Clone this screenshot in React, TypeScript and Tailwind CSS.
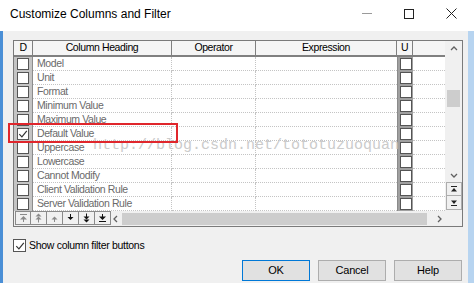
import React from "react";

const rows = [
  "Model",
  "Unit",
  "Format",
  "Minimum Value",
  "Maximum Value",
  "Default Value",
  "Uppercase",
  "Lowercase",
  "Cannot Modify",
  "Client Validation Rule",
  "Server Validation Rule",
];

function Check({ checked, size = 12 }: { checked?: boolean; size?: number }) {
  return (
    <div
      className="bg-white border border-[#555555] flex items-center justify-center shrink-0"
      style={{ width: size, height: size }}
    >
      {checked && (
        <svg width="10" height="10" viewBox="0 0 10 10">
          <path d="M1.3 5.2 L3.9 7.8 L8.8 1.8" stroke="#333" strokeWidth="1.2" fill="none" />
        </svg>
      )}
    </div>
  );
}

function ToolIcon({ kind }: { kind: number }) {
  const gray = "#8a8a8a";
  const black = "#111";
  switch (kind) {
    case 0:
      return (
        <svg width="9" height="10" viewBox="0 0 9 10">
          <rect x="1" y="1" width="7" height="1" fill={gray} />
          <path d="M4.5 3 L1 6.5 L8 6.5 Z" fill={gray} />
          <rect x="4" y="6" width="1" height="3" fill={gray} />
        </svg>
      );
    case 1:
      return (
        <svg width="9" height="10" viewBox="0 0 9 10">
          <path d="M4.5 0.5 L1.5 3.5 L7.5 3.5 Z" fill={gray} />
          <path d="M4.5 3.5 L1.5 6.5 L7.5 6.5 Z" fill={gray} />
          <rect x="4" y="6" width="1" height="3.5" fill={gray} />
        </svg>
      );
    case 2:
      return (
        <svg width="9" height="10" viewBox="0 0 9 10">
          <path d="M4.5 3.5 L1.5 6.5 L7.5 6.5 Z" fill={gray} />
          <rect x="4" y="6" width="1" height="3" fill={gray} />
        </svg>
      );
    case 3:
      return (
        <svg width="9" height="10" viewBox="0 0 9 10">
          <rect x="4" y="1" width="1" height="3" fill={black} />
          <path d="M4.5 7 L1.5 4 L7.5 4 Z" fill={black} />
        </svg>
      );
    case 4:
      return (
        <svg width="9" height="10" viewBox="0 0 9 10">
          <rect x="4" y="0.5" width="1" height="3.5" fill={black} />
          <path d="M4.5 6.5 L1.5 3.5 L7.5 3.5 Z" fill={black} />
          <path d="M4.5 9.5 L1.5 6.5 L7.5 6.5 Z" fill={black} />
        </svg>
      );
    default:
      return (
        <svg width="9" height="10" viewBox="0 0 9 10">
          <rect x="4" y="1" width="1" height="3" fill={black} />
          <path d="M4.5 7 L1 3.5 L8 3.5 Z" fill={black} />
          <rect x="1" y="8" width="7" height="1" fill={black} />
        </svg>
      );
  }
}

function Chevron({ dir }: { dir: "up" | "down" | "left" | "right" }) {
  const d =
    dir === "up"
      ? "M1 5 L4 2 L7 5"
      : dir === "down"
      ? "M1 2 L4 5 L7 2"
      : dir === "left"
      ? "M5 1 L2 4 L5 7"
      : "M2 1 L5 4 L2 7";
  return (
    <svg width="8" height="8" viewBox="0 0 8 8">
      <path d={d} stroke="#606060" strokeWidth="1.3" fill="none" />
    </svg>
  );
}

export default function App() {
  return (
    <div className="w-[474px] h-[283px] bg-white flex flex-col overflow-hidden font-['Liberation_Sans',Arial,sans-serif] text-black">
      {/* Title bar */}
      <div className="h-[31px] flex items-center bg-white shrink-0">
        <div className="pl-[10px] text-[12px] flex-1 pb-[3px]">Customize Columns and Filter</div>
        <div className="flex items-center h-full pb-[4px]">
          <div className="w-[42px] flex justify-center">
            <div className="w-[10px] h-[1px] bg-[#9a9a9a]" />
          </div>
          <div className="w-[42px] flex justify-center">
            <div className="w-[10px] h-[10px] border border-[#222]" />
          </div>
          <div className="w-[44px] flex justify-center pr-[2px]">
            <svg width="11" height="11" viewBox="0 0 11 11">
              <path d="M0.5 0.5 L10.5 10.5 M10.5 0.5 L0.5 10.5" stroke="#222" strokeWidth="1" />
            </svg>
          </div>
        </div>
      </div>

      {/* Body */}
      <div className="flex flex-1">
        <div className="w-[3px] bg-[#4a8fd6]" />
        <div className="flex-1 bg-[#f0f0f0] relative pl-[10px] pt-[9px] flex flex-col">
          {/* Grid */}
          <div className="w-[450px] h-[187px] border border-[#7a7a7a] flex flex-col bg-white relative">
            <div className="flex h-[170px]">
              {/* table */}
              <div className="flex-1 flex flex-col text-[10.5px] tracking-[-0.4px]">
                <div className="h-[16px] flex bg-[#f5f5f5] border-b-2 border-[#808080] leading-[13px]">
                  <div className="w-[19px] text-center border-r border-[#808080]">D</div>
                  <div className="w-[139px] text-center border-r border-[#808080]">Column Heading</div>
                  <div className="w-[84px] text-center border-r border-[#808080]">Operator</div>
                  <div className="w-[141px] text-center border-r border-[#808080]">Expression</div>
                  <div className="w-[16px] text-center border-r border-[#808080]">U</div>
                  <div className="flex-1" />
                </div>
                {rows.map((r, i) => (
                  <div key={r} className="h-[14px] flex">
                    <div className="w-[19px] bg-[#c4c4c4] flex items-center pl-[3px] border-r border-[#8c8c8c]">
                      <Check checked={i === 5} />
                    </div>
                    <div className="w-[139px] border-r border-dotted border-b border-[#c4c4c4] text-[#6a6a6a] pl-[4px] leading-[13px]">
                      {r}
                    </div>
                    <div className="w-[84px] border-r border-dotted border-b border-[#c4c4c4]" />
                    <div className="w-[141px] border-b border-dotted border-[#c4c4c4]" />
                    <div className="w-[16px] bg-[#a0a0a0] flex items-center justify-center border-l border-[#8a8a8a]">
                      <Check />
                    </div>
                    <div className="flex-1 border-b border-dotted border-[#c4c4c4]" />
                  </div>
                ))}
              </div>
              {/* vertical scrollbar */}
              <div className="w-[17px] bg-[#f0f0f0] flex flex-col items-center">
                <div className="h-[14px] flex items-center justify-center pt-[1px]">
                  <Chevron dir="up" />
                </div>
                <div className="flex-1 w-full px-[2px] flex flex-col">
                  <div className="h-[35px]" />
                  <div className="h-[17px] bg-[#cdcdcd]" />
                </div>
                <div className="h-[13px] flex items-center justify-center">
                  <Chevron dir="down" />
                </div>
                <div className="w-[16px] h-[14px] border border-[#adadad] bg-[#f0f0f0] flex items-center justify-center">
                  <svg width="8" height="8" viewBox="0 0 8 8">
                    <rect x="1" y="1" width="6" height="1" fill="#222" />
                    <path d="M4 3 L1 6.5 L7 6.5 Z" fill="#222" />
                  </svg>
                </div>
                <div className="w-[16px] h-[14px] border border-t-0 border-[#adadad] bg-[#f0f0f0] flex items-center justify-center mb-[1px]">
                  <svg width="8" height="8" viewBox="0 0 8 8">
                    <path d="M4 5 L1 1.5 L7 1.5 Z" fill="#222" />
                    <rect x="1" y="6" width="6" height="1" fill="#222" />
                  </svg>
                </div>
              </div>
            </div>
            {/* bottom bar */}
            <div className="flex h-[15px] bg-[#f0f0f0]">
              <div className="flex pl-[1px]">
                {[0, 1, 2, 3, 4, 5].map((k) => (
                  <div
                    key={k}
                    className="w-[16px] h-[14px] bg-[#f0f0f0] border border-[#8a8a8a] border-l-0 first:border-l flex items-center justify-center"
                  >
                    <ToolIcon kind={k} />
                  </div>
                ))}
              </div>
              <div className="w-[9px] flex items-center justify-center">
                <Chevron dir="left" />
              </div>
              <div className="flex-1 flex items-center pr-[8px] pl-[2px]">
                <div className="h-[12px] w-full bg-[#cdcdcd]" />
              </div>
              <div className="w-[10px] flex items-center justify-center">
                <Chevron dir="right" />
              </div>
              <div className="w-[17px]" />
            </div>

            {/* watermark */}
            <div className="absolute left-[79px] top-[97px] font-['Liberation_Mono',monospace] text-[15px] leading-[16px] text-[#c6c6c6] whitespace-nowrap pointer-events-none opacity-90">
              http://blog.csdn.net/tototuzuoquan
            </div>
          </div>

          {/* red highlight */}
          <div className="absolute left-[5px] top-[92px] w-[170px] h-[20px] border-2 border-[#e0262c] pointer-events-none" />

          {/* show filter checkbox */}
          <div className="flex items-center mt-[12px] h-[13px] text-[10.5px] tracking-[-0.3px]">
            <Check checked size={13} />
            <span className="ml-[3px]">Show column filter buttons</span>
          </div>

          {/* buttons */}
          <div className="flex justify-end gap-[8px] w-[450px] pr-[1px] mt-[8px] text-[11px] tracking-[-0.2px]">
            <div className="w-[68px] h-[21px] bg-[#e1e1e1] border border-[#0078d7] flex items-center justify-center">
              OK
            </div>
            <div className="w-[68px] h-[21px] bg-[#e1e1e1] border border-[#adadad] flex items-center justify-center">
              Cancel
            </div>
            <div className="w-[68px] h-[21px] bg-[#e1e1e1] border border-[#adadad] flex items-center justify-center">
              Help
            </div>
          </div>
        </div>
        <div className="w-[6px] bg-[#b7d4f0]" />
      </div>
    </div>
  );
}
